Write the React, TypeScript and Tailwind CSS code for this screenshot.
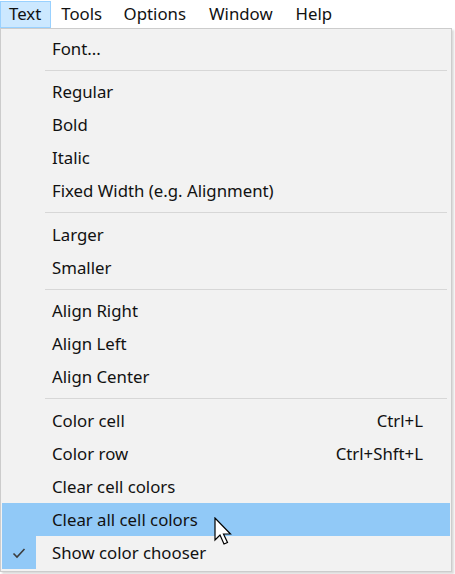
import React from "react";

type Item =
  | { kind: "sep" }
  | { kind: "item"; label: string; shortcut?: string; hover?: boolean; checked?: boolean };

const items: Item[] = [
  { kind: "item", label: "Font..." },
  { kind: "sep" },
  { kind: "item", label: "Regular" },
  { kind: "item", label: "Bold" },
  { kind: "item", label: "Italic" },
  { kind: "item", label: "Fixed Width (e.g. Alignment)" },
  { kind: "sep" },
  { kind: "item", label: "Larger" },
  { kind: "item", label: "Smaller" },
  { kind: "sep" },
  { kind: "item", label: "Align Right" },
  { kind: "item", label: "Align Left" },
  { kind: "item", label: "Align Center" },
  { kind: "sep" },
  { kind: "item", label: "Color cell", shortcut: "Ctrl+L" },
  { kind: "item", label: "Color row", shortcut: "Ctrl+Shft+L" },
  { kind: "item", label: "Clear cell colors" },
  { kind: "item", label: "Clear all cell colors", hover: true },
  { kind: "item", label: "Show color chooser", checked: true },
];

const menus = ["Text", "Tools", "Options", "Window", "Help"];

function Check() {
  return (
    <svg width="14" height="12" viewBox="0 0 14 12" fill="none">
      <path d="M1.5 6.5 L5 10 L12.5 2" stroke="#3c3c3c" strokeWidth="1.6" />
    </svg>
  );
}

function Cursor() {
  return (
    <svg width="20" height="30" viewBox="0 0 20 30" className="absolute left-[214px] top-[517px]">
      <path
        d="M1 1 L1 23 L6 18 L10 27 L13.5 25.5 L9.5 17 L16.5 17 Z"
        fill="#ffffff"
        stroke="#000000"
        strokeWidth="1.2"
        strokeLinejoin="miter"
      />
    </svg>
  );
}

function MenuRow({ item }: { item: Extract<Item, { kind: "item" }> }) {
  return (
    <div
      className={`flex h-[33px] items-center ${
        item.hover ? "bg-[#91c9f7]" : ""
      }`}
    >
      <div
        className={`flex h-full w-[34px] items-center justify-center ${
          item.checked ? "bg-[#91c9f7]" : ""
        }`}
      >
        {item.checked && <Check />}
      </div>
      <span className="ml-[16px] flex-1">{item.label}</span>
      {item.shortcut && <span className="mr-[27px]">{item.shortcut}</span>}
    </div>
  );
}

export default function App() {
  return (
    <div
      className="relative h-[574px] w-[455px] overflow-hidden bg-white text-[16.8px] text-[#111111]"
      style={{ fontFamily: '"Noto Sans", "Open Sans", sans-serif' }}
    >
      <div className="flex h-[28px] items-center bg-white">
        {menus.map((m, i) => (
          <div
            key={m}
            className={`flex h-[27px] items-center ${
              i === 0
                ? "border border-[#99d1ff] bg-[#cce8ff] pl-[8px] pr-[9px]"
                : i === 1
                ? "px-[10px]"
                : "px-[11.5px]"
            }`}
          >
            {m}
          </div>
        ))}
      </div>
      <div className="w-[452px] border border-[#cccccc] bg-[#f2f2f2] px-[1px] pb-[2px] pt-[3px] shadow-[2px_2px_2px_rgba(0,0,0,0.15)]">
        {items.map((it, i) =>
          it.kind === "sep" ? (
            <div key={i} className="flex h-[10.5px] items-center pl-[43px] pr-[3px]">
              <div className="h-px w-full bg-[#d7d7d7]" />
            </div>
          ) : (
            <MenuRow key={i} item={it} />
          )
        )}
      </div>
      <Cursor />
    </div>
  );
}
